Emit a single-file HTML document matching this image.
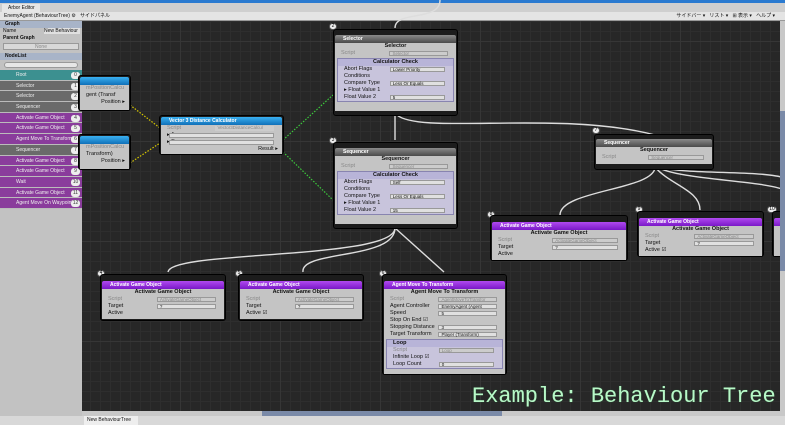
<!DOCTYPE html><html><head><style>
*{margin:0;padding:0;box-sizing:border-box}
body{width:785px;height:425px;overflow:hidden;background:#262626;font-family:"Liberation Sans",sans-serif;font-size:5.5px;color:#111;position:relative}
.a{position:absolute}
#cv{left:82px;top:21px;width:698px;height:390px;background-color:#272727;background-image:linear-gradient(#363636 1px,transparent 1px),linear-gradient(90deg,#363636 1px,transparent 1px),linear-gradient(#2e2e2e 1px,transparent 1px),linear-gradient(90deg,#2e2e2e 1px,transparent 1px);background-size:100px 100px,100px 100px,10px 10px,10px 10px;background-position:-2px 20px,-2px 20px,-2px 0,-2px 0}
.n{position:absolute;background:#1c1c1c;border:1px solid #000;border-radius:3px}
.h{position:absolute;left:1px;right:1px;height:8px;color:#fff;font-weight:bold;font-size:5px;line-height:8px;padding-left:8px;border-radius:2px 2px 0 0}
.hp{background:linear-gradient(#b04af0,#7a18c8)}
.hg{background:linear-gradient(#8a8a8a,#4a4a4a)}
.hb{background:linear-gradient(#3ab0f0,#1070b8)}
.bd{position:absolute;left:1px;right:1px;background:#c4c4c4}
.r{height:7px;line-height:7px;padding-left:6px;position:relative;white-space:nowrap;overflow:hidden}
.r i{position:absolute;left:45%;right:8px;top:1px;height:5px;background:#e0e0e0;border:1px solid #999;font-style:normal;line-height:4px;font-size:4.5px;padding-left:2px}
.t{font-weight:bold;text-align:center;padding-left:0}
.g{color:#888}
.cc{background:#c8c4dc;border:1px solid #8884b0;margin:1px 2px}
.num{position:absolute;width:8px;height:7px;border-radius:4px;background:#eee;border:1px solid #555;font-size:5px;line-height:5px;text-align:center;color:#000}
#lp{left:0;top:21px;width:82px;height:396px;background:#c2c2c2}
.li{height:10.7px;line-height:10px;color:#eee;padding-left:16px;font-size:5px;position:relative;border-bottom:1px solid #bbb}
.li b{position:absolute;right:2px;top:2px;width:9px;height:7px;border-radius:3px;background:#eee;color:#333;font-size:5px;line-height:7px;text-align:center;font-weight:normal}
.pu{background:#8a3c9c}.gr{background:#6a6a6a}
</style></head><body>
<div class="a" style="left:0;top:0;width:785px;height:3px;background:#2a7ad0"></div>
<div class="a" style="left:0;top:3px;width:785px;height:9px;background:#cfcfcf"></div>
<div class="a" style="left:2px;top:4px;width:38px;height:8px;background:#e6e6e6;font-size:5px;line-height:8px;padding-left:6px">Arbor Editor</div>
<div class="a" style="left:0;top:12px;width:785px;height:9px;background:#e4e4e4;border-bottom:1px solid #999;font-size:5px;line-height:8px;padding-left:4px">EnemyAgent (BehaviourTree) ⚙ &nbsp; サイドパネル<span style="position:absolute;right:10px">サイドバー ▾ &nbsp; リスト ▾ &nbsp; ⊞ 表示 ▾ &nbsp; ヘルプ ▾</span></div>
<div id="cv" class="a"></div>
<div id="lp" class="a">
<div style="background:#a8b4c8;height:7px;font-weight:bold;font-size:5px;line-height:7px;padding-left:5px">Graph</div>
<div style="height:7px;font-size:5px;line-height:7px;padding-left:3px">Name<span style="position:absolute;left:44px;background:#e0e0e0;width:36px;height:6px">New Behaviour</span></div>
<div style="height:7px;font-size:5px;font-weight:bold;line-height:7px;padding-left:3px">Parent Graph</div>
<div style="margin:1px 3px;height:7px;background:#d8d8d8;border:1px solid #999;text-align:center;font-size:5px;color:#888">None</div>
<div style="background:#a8b4c8;height:7px;margin-top:3px;font-weight:bold;font-size:5px;line-height:7px;padding-left:5px">NodeList</div>
<div style="margin:2px 4px;height:6px;background:#e6e6e6;border-radius:3px;border:1px solid #999"></div>
<div style="margin-top:2px">
<div class="li" style="background:#3c9090">Root<b>0</b></div>
<div class="li gr">Selector<b>1</b></div>
<div class="li gr">Selector<b>2</b></div>
<div class="li gr">Sequencer<b>3</b></div>
<div class="li pu">Activate Game Object<b>4</b></div>
<div class="li pu">Activate Game Object<b>5</b></div>
<div class="li pu">Agent Move To Transform<b>6</b></div>
<div class="li gr">Sequencer<b>7</b></div>
<div class="li pu">Activate Game Object<b>8</b></div>
<div class="li pu">Activate Game Object<b>9</b></div>
<div class="li pu">Wait<b>10</b></div>
<div class="li pu">Activate Game Object<b>11</b></div>
<div class="li pu">Agent Move On Waypoint<b>12</b></div>
</div></div>
<svg class="a" style="left:0;top:0" width="785" height="425" fill="none">
<path d="M130 105 L160 128 M130 163 L160 143" stroke="#d8c800" stroke-width="1.2" stroke-dasharray="1.5 1.5"/>
<path d="M283 140 L333 95 M283 152 L333 200" stroke="#3cc83c" stroke-width="1.2" stroke-dasharray="1.5 1.5"/>
<g stroke="#ddd" stroke-width="1.4">
<path d="M395 28 C395 10 440 22 440 0"/>
<path d="M395 115 L395 140"/>
<path d="M397 115 C420 135 560 110 655 135"/>
<path d="M395 228 C395 260 170 250 168 272"/>
<path d="M395 228 C395 260 300 250 303 272"/>
<path d="M395 228 L444 272"/>
<path d="M655 167 C655 190 560 190 560 215"/>
<path d="M655 167 C670 185 700 190 700 210"/>
<path d="M657 167 C680 180 760 180 785 190"/>
<path d="M657 167 C690 175 760 170 785 178"/>
</g></svg>
<div class="n" style="left:78px;top:75px;width:53px;height:36px"><div class="h hb" style="top:1px"></div><div class="bd" style="top:9px;height:25px"><div class="r g">mPositionCalcu</div><div class="r">gent (Transf</div><div class="r" style="text-align:right;padding-right:4px">Position ▸</div></div></div>
<div class="n" style="left:78px;top:134px;width:53px;height:36px"><div class="h hb" style="top:1px"></div><div class="bd" style="top:9px;height:25px"><div class="r g">mPositionCalcu</div><div class="r">Transform)</div><div class="r" style="text-align:right;padding-right:4px">Position ▸</div></div></div>
<div class="n" style="left:159px;top:115px;width:125px;height:40px"><div class="h hb" style="top:1px">Vector 3 Distance Calculator</div><div class="bd" style="top:9px;height:29px"><div class="r g">Script<i style="background:#ccc;border:0">Vector3DistanceCalcul</i></div><div class="r">▸ A<i style="left:8px"></i></div><div class="r">▸ B<i style="left:8px"></i></div><div class="r" style="text-align:right;padding-right:4px">Result ▸</div></div></div>
<div class="num" style="left:329px;top:23px">2</div>
<div class="n" style="left:333px;top:29px;width:125px;height:87px"><div class="h hg" style="top:5px">Selector</div><div class="bd" style="top:13px;height:68px">
<div class="r t">Selector</div><div class="r g">Script<i style="background:#ccc">Selector</i></div>
<div class="cc"><div class="r t" style="background:#b8b4d8">Calculator Check</div><div class="r">Abort Flags<i>Lower Priority</i></div><div class="r">Conditions</div><div class="r">Compare Type<i>Less Or Equals</i></div><div class="r">▸ Float Value 1</div><div class="r">Float Value 2<i>5</i></div></div></div></div>
<div class="num" style="left:329px;top:137px">3</div>
<div class="n" style="left:333px;top:142px;width:125px;height:87px"><div class="h hg" style="top:5px">Sequencer</div><div class="bd" style="top:13px;height:68px">
<div class="r t">Sequencer</div><div class="r g">Script<i style="background:#ccc">Sequencer</i></div>
<div class="cc"><div class="r t" style="background:#b8b4d8">Calculator Check</div><div class="r">Abort Flags<i>Self</i></div><div class="r">Conditions</div><div class="r">Compare Type<i>Less Or Equals</i></div><div class="r">▸ Float Value 1</div><div class="r">Float Value 2<i>15</i></div></div></div></div>
<div class="num" style="left:592px;top:127px">7</div>
<div class="n" style="left:594px;top:134px;width:120px;height:36px"><div class="h hg" style="top:4px">Sequencer</div><div class="bd" style="top:12px;height:17px"><div class="r t">Sequencer</div><div class="r g">Script<i style="background:#ccc">Sequencer</i></div></div></div>
<div class="num" style="left:487px;top:211px">8</div>
<div class="n" style="left:490px;top:215px;width:138px;height:46px"><div class="h hp" style="top:6px">Activate Game Object</div><div class="bd" style="top:14px;height:30px"><div class="r t">Activate Game Object</div><div class="r g">Script<i style="background:#ccc">ActivateGameObject</i></div><div class="r">Target<i>?</i></div><div class="r">Active</div></div></div>
<div class="num" style="left:635px;top:206px">9</div>
<div class="n" style="left:637px;top:211px;width:127px;height:46px"><div class="h hp" style="top:6px">Activate Game Object</div><div class="bd" style="top:14px;height:30px"><div class="r t">Activate Game Object</div><div class="r g">Script<i style="background:#ccc">ActivateGameObject</i></div><div class="r">Target<i>?</i></div><div class="r">Active ☑</div></div></div>
<div class="num" style="left:767px;top:206px;width:10px">10</div>
<div class="n" style="left:772px;top:211px;width:20px;height:46px"><div class="h hp" style="top:6px"></div><div class="bd" style="top:14px;height:30px"></div></div>
<div class="num" style="left:97px;top:270px">4</div>
<div class="n" style="left:100px;top:274px;width:126px;height:47px"><div class="h hp" style="top:6px">Activate Game Object</div><div class="bd" style="top:14px;height:30px"><div class="r t">Activate Game Object</div><div class="r g">Script<i style="background:#ccc">ActivateGameObject</i></div><div class="r">Target<i>?</i></div><div class="r">Active</div></div></div>
<div class="num" style="left:235px;top:270px">5</div>
<div class="n" style="left:238px;top:274px;width:126px;height:47px"><div class="h hp" style="top:6px">Activate Game Object</div><div class="bd" style="top:14px;height:30px"><div class="r t">Activate Game Object</div><div class="r g">Script<i style="background:#ccc">ActivateGameObject</i></div><div class="r">Target<i>?</i></div><div class="r">Active ☑</div></div></div>
<div class="num" style="left:379px;top:270px">6</div>
<div class="n" style="left:382px;top:274px;width:125px;height:101px"><div class="h hp" style="top:6px">Agent Move To Transform</div><div class="bd" style="top:14px;height:85px">
<div class="r t">Agent Move To Transform</div><div class="r g">Script<i style="background:#ccc">AgentMoveToTransfor</i></div><div class="r">Agent Controller<i>EnemyAgent (Agent</i></div><div class="r">Speed<i>5</i></div><div class="r">Stop On End ☑</div><div class="r">Stopping Distance<i>3</i></div><div class="r">Target Transform<i>Player (Transform)</i></div>
<div class="cc"><div class="r" style="font-weight:bold;background:#b8b4d8">Loop</div><div class="r g">Script<i style="background:#ccc">Loop</i></div><div class="r">Infinite Loop ☑</div><div class="r">Loop Count<i>0</i></div></div></div></div>
<div class="a" style="left:472px;top:384px;font-family:'Liberation Mono',monospace;font-size:22px;line-height:26px;color:#b8f8c8;text-shadow:0 0 1px #2a6a3a;white-space:nowrap">Example: Behaviour Tree</div>
<div class="a" style="left:780px;top:21px;width:5px;height:390px;background:#c8c8c8"><div style="margin-top:90px;height:160px;background:#7a8aa8"></div></div>
<div class="a" style="left:82px;top:411px;width:703px;height:5px;background:#c8c8c8"><div style="margin-left:180px;width:240px;height:5px;background:#7a8aa8"></div></div>
<div class="a" style="left:0;top:416px;width:785px;height:9px;background:#d8d8d8"><div style="margin-left:84px;width:54px;height:9px;background:#eee;font-size:5px;line-height:9px;padding-left:3px">New BehaviourTree</div></div>
</body></html>
